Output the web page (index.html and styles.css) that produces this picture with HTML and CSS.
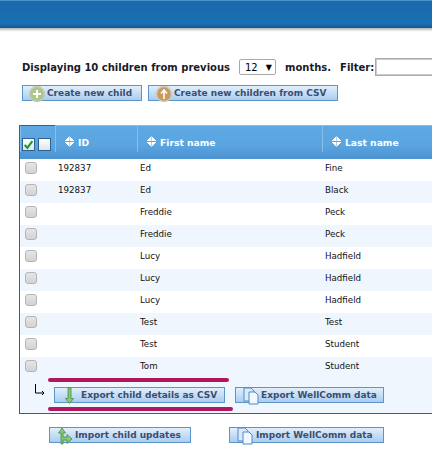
FILE: index.html
```html
<!DOCTYPE html>
<html lang="en">
<head>
    <meta charset="UTF-8">
    <title>Children</title>
    <link rel="stylesheet" href="styles.css">
</head>
<body>
    <div class="top-bar"></div>

    <div class="toolbar">
        <div class="filter-row">
            <span>Displaying 10 children from previous</span>
            <span class="month-select">12 <i class="caret">▼</i></span>
            <span class="months">months.</span>
            <span class="filter-label">Filter:</span>
            <span class="filter-input"></span>
        </div>
        <div class="button-row">
            <a class="btn btn-child">
                <svg class="icon" viewBox="0 0 18 18"><circle cx="9" cy="9" r="7.500" fill="#a9c88a" stroke="#c9c9c0" stroke-width="1.500"/><path d="M9 5v8M5 9h8" stroke="#fff" stroke-width="2"/></svg>
                Create new child
            </a>
            <a class="btn btn-csv">
                <svg class="icon" viewBox="0 0 18 18"><circle cx="9" cy="9" r="7.500" fill="#c99a5c" stroke="#cfc8bc" stroke-width="1.500"/><path d="M9 14V6M6 8.500L9 5l3 3.500" stroke="#fff" stroke-width="1.600" fill="none"/></svg>
                Create new children from CSV
            </a>
        </div>
    </div>

    <div class="table-wrap">
        <table class="children">
            <colgroup>
                <col class="col-check">
                <col class="col-id">
                <col class="col-first">
                <col class="col-last">
            </colgroup>
            <thead>
                <tr>
                    <th class="head-check">
                        <div class="boxes">
                            <span class="box"><svg viewBox="0 0 10 10"><path d="M1.500 5.500L4 8l4.500-6" stroke="#1f9a2e" stroke-width="2" fill="none"/></svg></span>
                            <span class="box"></span>
                        </div>
                    </th>
                    <th><span class="sort"></span>ID</th>
                    <th><span class="sort"></span>First name</th>
                    <th><span class="sort"></span>Last name</th>
                </tr>
            </thead>
            <tbody>
                <tr><td><span class="tick"></span></td><td>192837</td><td>Ed</td><td>Fine</td></tr>
                <tr><td><span class="tick"></span></td><td>192837</td><td>Ed</td><td>Black</td></tr>
                <tr><td><span class="tick"></span></td><td></td><td>Freddie</td><td>Peck</td></tr>
                <tr><td><span class="tick"></span></td><td></td><td>Freddie</td><td>Peck</td></tr>
                <tr><td><span class="tick"></span></td><td></td><td>Lucy</td><td>Hadfield</td></tr>
                <tr><td><span class="tick"></span></td><td></td><td>Lucy</td><td>Hadfield</td></tr>
                <tr><td><span class="tick"></span></td><td></td><td>Lucy</td><td>Hadfield</td></tr>
                <tr><td><span class="tick"></span></td><td></td><td>Test</td><td>Test</td></tr>
                <tr><td><span class="tick"></span></td><td></td><td>Test</td><td>Student</td></tr>
                <tr><td><span class="tick"></span></td><td></td><td>Tom</td><td>Student</td></tr>
            </tbody>
        </table>

        <div class="table-foot">
            <div class="mark mark-top"></div>
            <div class="export-row">
                <svg class="corner" viewBox="0 0 10 11"><path d="M0.500 0v9H9M7 7l2 2-2 2" stroke="#000" fill="none"/></svg>
                <a class="btn btn-export">
                    <svg class="icon" viewBox="0 0 18 18"><path d="M7 1h3v10.500h2.500L8.500 16.500 4.500 11.500H7z" fill="#8cc47a" stroke="#3f8f3f" stroke-width="0.800"/></svg>
                    Export child details as CSV
                </a>
                <a class="btn btn-well-export">
                    <svg class="icon" viewBox="0 0 18 18"><path d="M2 1h7l3 3v10H2z" fill="#dce9f8" stroke="#4f8bc9"/><path d="M7 5h6l3 3v9H7z" fill="#f3f8fe" stroke="#4f8bc9"/></svg>
                    Export WellComm data
                </a>
            </div>
            <div class="mark mark-bottom"></div>
        </div>
    </div>

    <div class="import-row">
        <a class="btn btn-import">
            <svg class="icon" viewBox="0 0 18 18"><path d="M5 17V6H2.500L6 1l3.500 5H7v4h4V7.500l5 4.500-5 4.500V13H7v4z" fill="#8cc47a" stroke="#3f8f3f" stroke-width="0.800"/></svg>
            Import child updates
        </a>
        <a class="btn btn-well-import">
            <svg class="icon" viewBox="0 0 18 18"><path d="M2 1h7l3 3v10H2z" fill="#dce9f8" stroke="#4f8bc9"/><path d="M7 5h6l3 3v9H7z" fill="#f3f8fe" stroke="#4f8bc9"/></svg>
            Import WellComm data
        </a>
    </div>
</body>
</html>
```

FILE: styles.css
```css
* {
    margin: 0;
    padding: 0;
    box-sizing: border-box;
}

body {
    width: 432px;
    height: 470px;
    overflow: hidden;
    background: white;
    font-family: "DejaVu Sans", Verdana, sans-serif;
    font-size: 9px;
    color: #111;
}

.top-bar {
    height: 28px;
    background: linear-gradient(#1a69ab, #1b70b3 85%, #14568f);
    border-top: 1px solid #4b93cf;
    box-shadow: 0 1px 2px 1px #bbb;
}

/* Filter and create buttons */
.toolbar {
    padding: 30px 0 0 22px;
}

.filter-row {
    display: flex;
    align-items: center;
    height: 18px;
    font-size: 10px;
    font-weight: bold;
    color: #1a1a2a;
    white-space: nowrap;
}

.month-select {
    display: flex;
    align-items: center;
    justify-content: space-between;
    flex: none;
    width: 37px;
    height: 16px;
    margin-left: 9px;
    padding: 0 3px 0 5px;
    border: 1px solid #aaa;
    border-radius: 2px;
    font-size: 10px;
    font-weight: normal;
    color: #000;
}

.caret {
    font-size: 8px;
    font-style: normal;
}

.months {
    margin-left: 9px;
}

.filter-label {
    margin-left: 9px;
}

.filter-input {
    flex: none;
    width: 70px;
    height: 18px;
    margin-left: 1px;
    border: 1px solid #aaa;
    box-shadow: inset 0 0 0 1px #ccc;
}

.button-row {
    display: flex;
    gap: 6px;
    margin-top: 9px;
}

/* Buttons */
.btn {
    display: flex;
    align-items: center;
    flex: none;
    height: 16px;
    border: 1px solid #5b96ca;
    background: linear-gradient(#e2effb, #a9cdef);
    font-size: 9px;
    font-weight: bold;
    color: #3c4d70;
    white-space: nowrap;
}

.icon {
    flex: none;
    width: 18px;
    height: 18px;
    margin: 2px 1px 0 6px;
}

.btn-child { width: 120px; }
.btn-child .icon { margin-left: 5px; }
.btn-csv { width: 190px; }
.btn-export { width: 171px; }
.btn-export .icon { margin-right: 2px; }
.btn-well-export { width: 149px; margin-left: 10px; }
.btn-import { width: 142px; }
.btn-well-import { width: 155px; margin-left: 38px; }
.btn-well-import .icon { margin-right: 2px; }

/* Table */
.table-wrap {
    width: 413px;
    margin: 24px 0 0 19px;
    border-left: 1px solid #2d6296;
    border-bottom: 1px solid #2d6296;
}

.children {
    width: 412px;
    table-layout: fixed;
    border-collapse: separate;
    border-spacing: 0;
}

.col-check { width: 35px; }
.col-id { width: 82px; }
.col-first { width: 185px; }

.children th {
    height: 34px;
    padding: 0 0 1px 10px;
    background:
        linear-gradient(#86bfea, #86bfea) left top / 1px 26px no-repeat,
        linear-gradient(#5ea8e4 0%, #5aa4e0 60%, #4a92d0 100%);
    border-top: 1px solid #86bfea;
    text-align: left;
    font-size: 9.2px;
    font-weight: bold;
    color: white;
}

.children th:first-child {
    padding: 0 0 0 2px;
    border-top-color: #2d6296;
}

.boxes {
    display: flex;
    gap: 3px;
    margin-top: 4px;
}

.sort {
    display: inline-block;
    width: 9px;
    height: 11px;
    margin-right: 4px;
    vertical-align: -1px;
    background:
        linear-gradient(to bottom right, transparent 50%, white 50%) left top / 50% 5px no-repeat,
        linear-gradient(to bottom left, transparent 50%, white 50%) right top / 50% 5px no-repeat,
        linear-gradient(to top right, transparent 50%, white 50%) left bottom / 50% 5px no-repeat,
        linear-gradient(to top left, transparent 50%, white 50%) right bottom / 50% 5px no-repeat;
}

.box {
    flex: none;
    width: 13px;
    height: 13px;
    border: 1px solid #2d6296;
    background: linear-gradient(#fff, #dfe5ea);
}

.box svg {
    display: block;
    width: 11px;
    height: 11px;
}

.children td {
    height: 22px;
    padding: 0 0 4px 3px;
    font-size: 8.7px;
    color: #111;
}

.children td:first-child {
    padding: 0 0 4px 5px;
}

.children tbody tr:nth-child(even) td {
    background: #eff6fd;
}

.tick {
    display: block;
    width: 12px;
    height: 12px;
    border: 1px solid #b5b5b5;
    border-radius: 3px;
    background: linear-gradient(#e6e6e6, #d2d2d2);
}

/* Footer below the rows */
.table-foot {
    height: 35px;
    background: #eff6fd;
}

.mark {
    height: 4px;
    margin-left: 28px;
    border-radius: 2px;
    background: #b0175f;
}

.mark-top { width: 181px; margin-top: -1px; }
.mark-bottom { width: 185px; margin-top: 4px; }

.export-row {
    display: flex;
    align-items: center;
    height: 16px;
    margin-top: 5px;
    padding-left: 15px;
}

.corner {
    flex: none;
    width: 10px;
    height: 11px;
    margin: -3px 9px 0 0;
    align-self: flex-start;
}

.import-row {
    display: flex;
    margin: 13px 0 0 49px;
}
```
